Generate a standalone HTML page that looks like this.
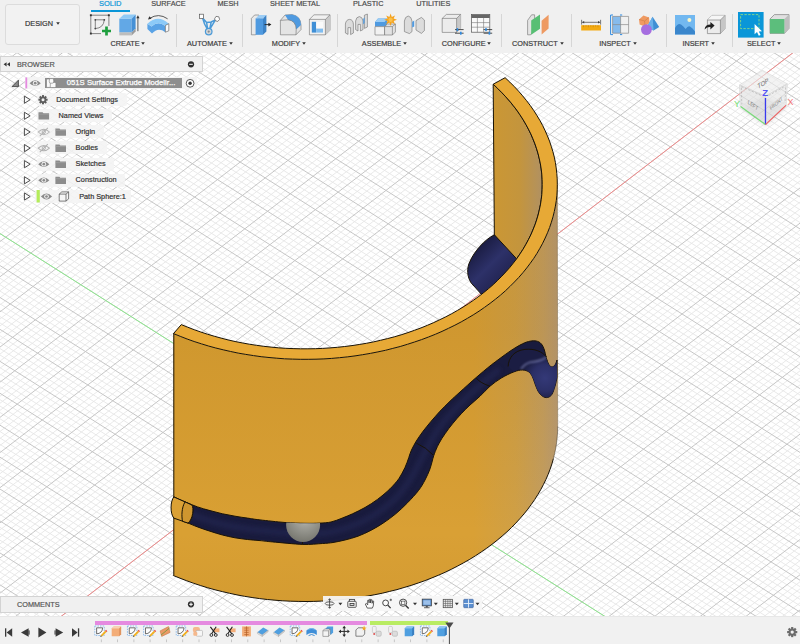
<!DOCTYPE html>
<html><head><meta charset="utf-8"><title>Fusion</title>
<style>
html,body{margin:0;padding:0;background:#fff;}
body{width:800px;height:644px;position:relative;overflow:hidden;font-family:"Liberation Sans",sans-serif;font-size:7.3px;color:#3c3c3c;}
.abs{position:absolute;}
.t{position:absolute;white-space:nowrap;line-height:10px;height:10px;-webkit-text-stroke:0.18px currentColor;}
.tab{color:#4a4a4a;}
.sep{position:absolute;width:1px;background:#d6d6d6;top:14px;height:33px;}
.pill{position:absolute;background:rgba(243,243,243,0.86);border-radius:2px;height:13px;}
.arr{position:absolute;width:0;height:0;border-left:1.8px solid transparent;border-right:1.8px solid transparent;border-top:2.4px solid #333;}
svg{position:absolute;left:0;top:0;overflow:visible;}
</style></head><body>
<svg width="800" height="644" viewBox="0 0 800 644">
<path d="M-2.0 4.0L5.8 -2.0M-2.0 11.0L14.9 -2.0M-2.0 18.1L24.0 -2.0M-2.0 25.1L33.2 -2.0M-2.0 39.2L51.4 -2.0M-2.0 46.2L60.6 -2.0M-2.0 53.2L69.7 -2.0M-2.0 60.3L78.8 -2.0M-2.0 74.3L97.1 -2.0M-2.0 81.4L106.2 -2.0M-2.0 88.4L115.4 -2.0M-2.0 95.4L124.5 -2.0M-2.0 109.5L142.7 -2.0M-2.0 116.5L151.9 -2.0M-2.0 123.5L161.0 -2.0M-2.0 130.6L170.1 -2.0M-2.0 144.6L188.4 -2.0M-2.0 151.7L197.5 -2.0M-2.0 158.7L206.7 -2.0M-2.0 165.7L215.8 -2.0M-2.0 179.8L234.0 -2.0M-2.0 186.8L243.2 -2.0M-2.0 193.9L252.3 -2.0M-2.0 200.9L261.4 -2.0M-2.0 641.1L5.8 646.0M-2.0 215.0L279.7 -2.0M-2.0 634.7L15.9 646.0M-2.0 222.0L288.8 -2.0M-2.0 628.3L26.0 646.0M-2.0 229.0L298.0 -2.0M-2.0 621.9L36.1 646.0M-2.0 236.1L307.1 -2.0M-2.0 609.1L56.2 646.0M-2.0 250.1L325.3 -2.0M-2.0 602.8L66.3 646.0M-2.0 257.2L334.5 -2.0M-2.0 596.4L76.4 646.0M-2.0 264.2L343.6 -2.0M-2.0 590.0L86.5 646.0M-2.0 271.2L352.7 -2.0M-2.0 577.2L106.7 646.0M-2.0 285.3L371.0 -2.0M-2.0 570.8L116.8 646.0M-2.0 292.3L380.1 -2.0M-2.0 564.4L126.9 646.0M-2.0 299.4L389.3 -2.0M-2.0 558.1L137.0 646.0M-2.0 306.4L398.4 -2.0M-2.0 545.3L157.2 646.0M-2.0 320.5L416.7 -2.0M-2.0 538.9L167.2 646.0M-2.0 327.5L425.8 -2.0M-2.0 532.5L177.3 646.0M-2.0 334.5L434.9 -2.0M-2.0 526.1L187.4 646.0M-2.0 341.5L444.0 -2.0M-2.0 513.3L207.6 646.0M-2.0 355.6L462.3 -2.0M-2.0 507.0L217.7 646.0M-2.0 362.6L471.4 -2.0M-2.0 500.6L227.8 646.0M-2.0 369.7L480.6 -2.0M-2.0 494.2L237.9 646.0M-2.0 376.7L489.7 -2.0M-2.0 481.4L258.1 646.0M-2.0 390.8L508.0 -2.0M-2.0 475.0L268.2 646.0M-2.0 397.8L517.1 -2.0M-2.0 468.6L278.3 646.0M-2.0 404.8L526.2 -2.0M-2.0 462.2L288.3 646.0M-2.0 411.9L535.3 -2.0M-2.0 449.5L308.5 646.0M-2.0 425.9L553.6 -2.0M-2.0 443.1L318.6 646.0M-2.0 433.0L562.7 -2.0M-2.0 436.7L328.7 646.0M-2.0 440.0L571.9 -2.0M-2.0 430.3L338.8 646.0M-2.0 447.0L581.0 -2.0M-2.0 417.5L359.0 646.0M-2.0 461.1L599.3 -2.0M-2.0 411.2L369.1 646.0M-2.0 468.1L608.4 -2.0M-2.0 404.8L379.2 646.0M-2.0 475.2L617.5 -2.0M-2.0 398.4L389.3 646.0M-2.0 482.2L626.7 -2.0M-2.0 385.6L409.4 646.0M-2.0 496.3L644.9 -2.0M-2.0 379.2L419.5 646.0M-2.0 503.3L654.0 -2.0M-2.0 372.8L429.6 646.0M-2.0 510.3L663.2 -2.0M-2.0 366.4L439.7 646.0M-2.0 517.4L672.3 -2.0M-2.0 353.7L459.9 646.0M-2.0 531.4L690.6 -2.0M-2.0 347.3L470.0 646.0M-2.0 538.5L699.7 -2.0M-2.0 340.9L480.1 646.0M-2.0 545.5L708.8 -2.0M-2.0 334.5L490.2 646.0M-2.0 552.5L718.0 -2.0M-2.0 321.7L510.4 646.0M-2.0 566.6L736.2 -2.0M-2.0 315.3L520.5 646.0M-2.0 573.6L745.3 -2.0M-2.0 309.0L530.5 646.0M-2.0 580.6L754.5 -2.0M-2.0 302.6L540.6 646.0M-2.0 587.7L763.6 -2.0M-2.0 289.8L560.8 646.0M-2.0 601.7L781.9 -2.0M-2.0 283.4L570.9 646.0M-2.0 608.8L791.0 -2.0M-2.0 277.0L581.0 646.0M-2.0 615.8L800.1 -2.0M-2.0 270.6L591.1 646.0M-2.0 622.8L802.0 3.6M-2.0 257.9L611.3 646.0M-2.0 636.9L802.0 17.7M-2.0 251.5L621.4 646.0M-2.0 643.9L802.0 24.7M-2.0 245.1L631.5 646.0M4.5 646.0L802.0 31.7M-2.0 238.7L641.6 646.0M13.6 646.0L802.0 38.8M-2.0 225.9L661.7 646.0M31.8 646.0L802.0 52.8M-2.0 219.5L671.8 646.0M41.0 646.0L802.0 59.8M-2.0 213.2L681.9 646.0M50.1 646.0L802.0 66.9M-2.0 206.8L692.0 646.0M59.2 646.0L802.0 73.9M-2.0 194.0L712.2 646.0M77.5 646.0L802.0 88.0M-2.0 187.6L722.3 646.0M86.6 646.0L802.0 95.0M-2.0 181.2L732.4 646.0M95.8 646.0L802.0 102.0M-2.0 174.8L742.5 646.0M104.9 646.0L802.0 109.1M-2.0 162.1L762.7 646.0M123.1 646.0L802.0 123.1M-2.0 155.7L772.7 646.0M132.3 646.0L802.0 130.2M-2.0 149.3L782.8 646.0M141.4 646.0L802.0 137.2M-2.0 142.9L792.9 646.0M150.5 646.0L802.0 144.2M-2.0 130.1L802.0 639.0M168.8 646.0L802.0 158.3M-2.0 123.7L802.0 632.6M177.9 646.0L802.0 165.3M-2.0 117.4L802.0 626.2M187.1 646.0L802.0 172.4M-2.0 111.0L802.0 619.8M196.2 646.0L802.0 179.4M-2.0 98.2L802.0 607.0M214.4 646.0L802.0 193.5M-2.0 91.8L802.0 600.6M223.6 646.0L802.0 200.5M-2.0 85.4L802.0 594.3M232.7 646.0L802.0 207.5M-2.0 79.0L802.0 587.9M241.8 646.0L802.0 214.6M-2.0 66.3L802.0 575.1M260.1 646.0L802.0 228.6M-2.0 59.9L802.0 568.7M269.2 646.0L802.0 235.7M-2.0 53.5L802.0 562.3M278.4 646.0L802.0 242.7M-2.0 47.1L802.0 555.9M287.5 646.0L802.0 249.7M-2.0 34.3L802.0 543.2M305.8 646.0L802.0 263.8M-2.0 27.9L802.0 536.8M314.9 646.0L802.0 270.8M-2.0 21.6L802.0 530.4M324.0 646.0L802.0 277.8M-2.0 15.2L802.0 524.0M333.1 646.0L802.0 284.9M-2.0 2.4L802.0 511.2M351.4 646.0L802.0 298.9M1.2 -2.0L802.0 504.8M360.5 646.0L802.0 306.0M11.2 -2.0L802.0 498.5M369.7 646.0L802.0 313.0M21.3 -2.0L802.0 492.1M378.8 646.0L802.0 320.0M41.5 -2.0L802.0 479.3M397.1 646.0L802.0 334.1M51.6 -2.0L802.0 472.9M406.2 646.0L802.0 341.1M61.7 -2.0L802.0 466.5M415.3 646.0L802.0 348.2M71.8 -2.0L802.0 460.1M424.4 646.0L802.0 355.2M92.0 -2.0L802.0 447.4M442.7 646.0L802.0 369.3M102.1 -2.0L802.0 441.0M451.8 646.0L802.0 376.3M112.2 -2.0L802.0 434.6M461.0 646.0L802.0 383.3M122.3 -2.0L802.0 428.2M470.1 646.0L802.0 390.4M142.4 -2.0L802.0 415.4M488.4 646.0L802.0 404.4M152.5 -2.0L802.0 409.0M497.5 646.0L802.0 411.5M162.6 -2.0L802.0 402.7M506.6 646.0L802.0 418.5M172.7 -2.0L802.0 396.3M515.8 646.0L802.0 425.5M192.9 -2.0L802.0 383.5M534.0 646.0L802.0 439.6M203.0 -2.0L802.0 377.1M543.1 646.0L802.0 446.6M213.1 -2.0L802.0 370.7M552.3 646.0L802.0 453.7M223.2 -2.0L802.0 364.3M561.4 646.0L802.0 460.7M243.4 -2.0L802.0 351.6M579.7 646.0L802.0 474.8M253.4 -2.0L802.0 345.2M588.8 646.0L802.0 481.8M263.5 -2.0L802.0 338.8M597.9 646.0L802.0 488.8M273.6 -2.0L802.0 332.4M607.1 646.0L802.0 495.9M293.8 -2.0L802.0 319.6M625.3 646.0L802.0 509.9M303.9 -2.0L802.0 313.2M634.4 646.0L802.0 516.9M314.0 -2.0L802.0 306.8M643.6 646.0L802.0 524.0M324.1 -2.0L802.0 300.5M652.7 646.0L802.0 531.0M344.3 -2.0L802.0 287.7M671.0 646.0L802.0 545.1M354.4 -2.0L802.0 281.3M680.1 646.0L802.0 552.1M364.5 -2.0L802.0 274.9M689.2 646.0L802.0 559.1M374.5 -2.0L802.0 268.5M698.4 646.0L802.0 566.2M394.7 -2.0L802.0 255.8M716.6 646.0L802.0 580.2M404.8 -2.0L802.0 249.4M725.7 646.0L802.0 587.3M414.9 -2.0L802.0 243.0M734.9 646.0L802.0 594.3M425.0 -2.0L802.0 236.6M744.0 646.0L802.0 601.3M445.2 -2.0L802.0 223.8M762.3 646.0L802.0 615.4M455.3 -2.0L802.0 217.4M771.4 646.0L802.0 622.4M465.4 -2.0L802.0 211.0M780.5 646.0L802.0 629.5M475.5 -2.0L802.0 204.7M789.7 646.0L802.0 636.5M495.6 -2.0L802.0 191.9M505.7 -2.0L802.0 185.5M515.8 -2.0L802.0 179.1M525.9 -2.0L802.0 172.7M546.1 -2.0L802.0 160.0M556.2 -2.0L802.0 153.6M566.3 -2.0L802.0 147.2M576.4 -2.0L802.0 140.8M596.6 -2.0L802.0 128.0M606.7 -2.0L802.0 121.6M616.7 -2.0L802.0 115.2M626.8 -2.0L802.0 108.9M647.0 -2.0L802.0 96.1M657.1 -2.0L802.0 89.7M667.2 -2.0L802.0 83.3M677.3 -2.0L802.0 76.9M697.5 -2.0L802.0 64.1M707.6 -2.0L802.0 57.8M717.7 -2.0L802.0 51.4M727.8 -2.0L802.0 45.0M747.9 -2.0L802.0 32.2M758.0 -2.0L802.0 25.8M768.1 -2.0L802.0 19.4M778.2 -2.0L802.0 13.1M798.4 -2.0L802.0 0.3" stroke="#e6e6e6" stroke-width="0.9" fill="none"/>
<path d="M-2.0 32.1L42.3 -2.0M-2.0 67.3L88.0 -2.0M-2.0 102.4L133.6 -2.0M-2.0 137.6L179.3 -2.0M-2.0 172.8L224.9 -2.0M-2.0 207.9L270.6 -2.0M-2.0 615.5L46.1 646.0M-2.0 243.1L316.2 -2.0M-2.0 583.6L96.6 646.0M-2.0 278.3L361.9 -2.0M-2.0 551.7L147.1 646.0M-2.0 313.4L407.5 -2.0M-2.0 519.7L197.5 646.0M-2.0 348.6L453.2 -2.0M-2.0 487.8L248.0 646.0M-2.0 383.7L498.8 -2.0M-2.0 455.9L298.4 646.0M-2.0 418.9L544.5 -2.0M-2.0 423.9L348.9 646.0M-2.0 454.1L590.1 -2.0M-2.0 392.0L399.4 646.0M-2.0 489.2L635.8 -2.0M-2.0 360.1L449.8 646.0M-2.0 524.4L681.4 -2.0M-2.0 328.1L500.3 646.0M-2.0 559.5L727.1 -2.0M-2.0 296.2L550.7 646.0M-2.0 594.7L772.7 -2.0M-2.0 264.3L601.2 646.0M-2.0 629.9L802.0 10.6M-2.0 232.3L651.6 646.0M22.7 646.0L802.0 45.8M-2.0 200.4L702.1 646.0M68.4 646.0L802.0 80.9M-2.0 168.5L752.6 646.0M114.0 646.0L802.0 116.1M-2.0 136.5L802.0 645.4M159.7 646.0L802.0 151.3M-2.0 104.6L802.0 613.4M205.3 646.0L802.0 186.4M-2.0 72.6L802.0 581.5M251.0 646.0L802.0 221.6M-2.0 40.7L802.0 549.5M296.6 646.0L802.0 256.8M-2.0 8.8L802.0 517.6M342.3 646.0L802.0 291.9M31.4 -2.0L802.0 485.7M387.9 646.0L802.0 327.1M81.9 -2.0L802.0 453.7M433.6 646.0L802.0 362.2M132.3 -2.0L802.0 421.8M479.2 646.0L802.0 397.4M182.8 -2.0L802.0 389.9M524.9 646.0L802.0 432.6M233.3 -2.0L802.0 357.9M570.5 646.0L802.0 467.7M283.7 -2.0L802.0 326.0M616.2 646.0L802.0 502.9M334.2 -2.0L802.0 294.1M661.8 646.0L802.0 538.0M384.6 -2.0L802.0 262.1M707.5 646.0L802.0 573.2M435.1 -2.0L802.0 230.2M753.1 646.0L802.0 608.4M485.6 -2.0L802.0 198.3M798.8 646.0L802.0 643.5M536.0 -2.0L802.0 166.3M586.5 -2.0L802.0 134.4M636.9 -2.0L802.0 102.5M687.4 -2.0L802.0 70.5M737.8 -2.0L802.0 38.6M788.3 -2.0L802.0 6.7" stroke="#c6c6c6" stroke-width="1" fill="none"/>
<path d="M-44.4 205.5L907.8 808.1" stroke="#8fe88f" stroke-width="1" fill="none"/>
<path d="M-57.8 708.0L852.6 6.8" stroke="#f08a8a" stroke-width="1" fill="none"/>
<defs>
<linearGradient id="gFront" gradientUnits="userSpaceOnUse" x1="174" y1="0" x2="558" y2="0">
<stop offset="0" stop-color="#d9a033"/><stop offset="0.78" stop-color="#d9a035"/><stop offset="0.89" stop-color="#d0a046"/><stop offset="0.96" stop-color="#c49e5e"/><stop offset="1" stop-color="#b89a72"/></linearGradient>
<linearGradient id="gInner" gradientUnits="userSpaceOnUse" x1="494" y1="0" x2="545" y2="0">
<stop offset="0" stop-color="#cb9734"/><stop offset="0.5" stop-color="#c4953d"/><stop offset="0.85" stop-color="#b5925a"/><stop offset="1" stop-color="#ab8f68"/></linearGradient>
<linearGradient id="gNavy" gradientUnits="userSpaceOnUse" x1="0" y1="-11" x2="0" y2="11">
<stop offset="0" stop-color="#1a1c3c"/><stop offset="0.5" stop-color="#23264f"/><stop offset="1" stop-color="#1b1d40"/></linearGradient>
<radialGradient id="gBall" cx="0.55" cy="0.3" r="0.7"><stop offset="0" stop-color="#cfcfca"/><stop offset="0.3" stop-color="#a3a39c"/><stop offset="1" stop-color="#77776f"/></radialGradient>
<radialGradient id="gPocket" gradientUnits="userSpaceOnUse" cx="538" cy="366" r="22"><stop offset="0" stop-color="#3c4180"/><stop offset="0.6" stop-color="#2a2d5e"/><stop offset="1" stop-color="#1d1f45"/></radialGradient>
</defs>
<path d="M493.2 84.2L496.9 87.7 500.6 91.3 504.1 94.9 507.4 98.6 510.6 102.4 513.7 106.2 516.6 110.0 519.4 113.9 522.0 117.9 524.4 121.9 526.8 126.0 528.9 130.1 530.9 134.2 532.7 138.4 534.4 142.6 535.9 146.8 537.3 151.1 538.5 155.3 539.5 159.6 540.4 164.0 541.1 168.3 541.6 172.6 542.0 177.0 542.2 181.3 542.2 185.7 542.1 190.1 541.8 194.4 541.3 198.8 540.7 203.1 539.9 207.4 538.9 211.7 537.8 216.0 536.5 220.3 535.1 224.5 533.4 228.7 531.7 232.9 529.7 237.1 527.6 241.2 525.4 245.3 523.0 249.3 520.4 253.3 517.7 257.2 514.9 261.1 511.9 264.9 508.7 268.7 505.4 272.4 502.0 276.1 498.4 279.6 494.7 283.2Z" fill="url(#gInner)" stroke="#191307" stroke-width="1" stroke-linejoin="round"/>
<linearGradient id="gTube" gradientUnits="userSpaceOnUse" x1="476" y1="250" x2="508" y2="282"><stop offset="0" stop-color="#1b1d44"/><stop offset="0.45" stop-color="#2d3169"/><stop offset="1" stop-color="#1f214c"/></linearGradient>
<path d="M494.4 234.8L517.5 259.8L510 269.4L497.5 282.5L481.9 294.8L471.3 283.1C467 277 466.5 268 470 261.3C474 252 484 240 494.4 234.8Z" fill="url(#gTube)" stroke="#191307" stroke-width="1" stroke-linejoin="round"/>
<path d="M557.4 184.4L557.2 189.8 556.9 195.1 556.3 200.5 555.4 205.9 554.4 211.2 553.1 216.5 551.5 221.7 549.8 227.0 547.8 232.2 545.5 237.3 543.1 242.4 540.4 247.5 537.5 252.4 534.4 257.4 531.0 262.2 527.5 267.0 523.7 271.7 519.7 276.3 515.6 280.8 511.2 285.3 506.6 289.6 501.9 293.9 496.9 298.0 491.8 302.0 486.5 306.0 481.1 309.8 475.4 313.5 469.6 317.0 463.7 320.5 457.6 323.8 451.3 327.0 444.9 330.0 438.4 332.9 431.8 335.7 425.0 338.3 418.1 340.8 411.2 343.1 404.1 345.3 396.9 347.4 389.7 349.2 382.3 351.0 374.9 352.5 367.4 353.9 359.9 355.2 352.3 356.3 344.7 357.2 337.0 357.9 329.3 358.5 321.6 359.0 313.8 359.2 306.1 359.3 298.3 359.3 290.6 359.0 282.9 358.7 275.2 358.1 267.5 357.4 259.8 356.5 252.2 355.4 244.7 354.2 237.2 352.9 229.8 351.3 222.4 349.6 215.1 347.8 207.9 345.8 200.8 343.7 193.8 341.4 186.9 338.9 180.1 336.3 173.5 333.6 173.8 575.0 173.3 575.5 180.0 578.2 186.8 580.8 193.7 583.3 200.7 585.6 207.8 587.8 215.0 589.8 222.3 591.6 229.6 593.3 237.0 594.9 244.5 596.3 252.1 597.5 259.7 598.6 267.4 599.5 275.0 600.2 282.8 600.8 290.5 601.2 298.2 601.4 306.0 601.5 313.8 601.4 321.5 601.1 329.2 600.7 336.9 600.1 344.6 599.4 352.3 598.4 359.9 597.4 367.4 596.1 374.9 594.7 382.3 593.2 389.7 591.4 397.0 589.6 404.1 587.5 411.2 585.4 418.2 583.0 425.1 580.6 431.9 577.9 438.5 575.2 445.1 572.3 451.5 569.2 457.7 566.0 463.8 562.7 469.8 559.3 475.6 555.7 481.2 552.0 486.7 548.2 492.0 544.3 497.2 540.2 502.1 536.1 506.9 531.9 511.5 527.5 515.8 523.1 520.0 518.5 524.0 513.9 527.8 509.2 531.3 504.4 534.7 499.6 537.8 494.6 540.7 489.7 543.4 484.6 545.9 479.5 548.1 474.4 550.1 469.2 551.9 463.9 553.4 458.6 554.7 453.3 555.8 448.0 556.6 442.7 557.2 437.3 557.6 431.9 557.7 426.5Z" fill="url(#gFront)" stroke="none"/>
<linearGradient id="gV" gradientUnits="userSpaceOnUse" x1="0" y1="330" x2="0" y2="600"><stop offset="0" stop-color="#7a4a00" stop-opacity="0.10"/><stop offset="0.55" stop-color="#7a4a00" stop-opacity="0.03"/><stop offset="0.75" stop-color="#7a4a00" stop-opacity="0"/><stop offset="1" stop-color="#7a4a00" stop-opacity="0.05"/></linearGradient>
<path d="M557.4 184.4L557.2 189.8 556.9 195.1 556.3 200.5 555.4 205.9 554.4 211.2 553.1 216.5 551.5 221.7 549.8 227.0 547.8 232.2 545.5 237.3 543.1 242.4 540.4 247.5 537.5 252.4 534.4 257.4 531.0 262.2 527.5 267.0 523.7 271.7 519.7 276.3 515.6 280.8 511.2 285.3 506.6 289.6 501.9 293.9 496.9 298.0 491.8 302.0 486.5 306.0 481.1 309.8 475.4 313.5 469.6 317.0 463.7 320.5 457.6 323.8 451.3 327.0 444.9 330.0 438.4 332.9 431.8 335.7 425.0 338.3 418.1 340.8 411.2 343.1 404.1 345.3 396.9 347.4 389.7 349.2 382.3 351.0 374.9 352.5 367.4 353.9 359.9 355.2 352.3 356.3 344.7 357.2 337.0 357.9 329.3 358.5 321.6 359.0 313.8 359.2 306.1 359.3 298.3 359.3 290.6 359.0 282.9 358.7 275.2 358.1 267.5 357.4 259.8 356.5 252.2 355.4 244.7 354.2 237.2 352.9 229.8 351.3 222.4 349.6 215.1 347.8 207.9 345.8 200.8 343.7 193.8 341.4 186.9 338.9 180.1 336.3 173.5 333.6 173.8 575.0 173.3 575.5 180.0 578.2 186.8 580.8 193.7 583.3 200.7 585.6 207.8 587.8 215.0 589.8 222.3 591.6 229.6 593.3 237.0 594.9 244.5 596.3 252.1 597.5 259.7 598.6 267.4 599.5 275.0 600.2 282.8 600.8 290.5 601.2 298.2 601.4 306.0 601.5 313.8 601.4 321.5 601.1 329.2 600.7 336.9 600.1 344.6 599.4 352.3 598.4 359.9 597.4 367.4 596.1 374.9 594.7 382.3 593.2 389.7 591.4 397.0 589.6 404.1 587.5 411.2 585.4 418.2 583.0 425.1 580.6 431.9 577.9 438.5 575.2 445.1 572.3 451.5 569.2 457.7 566.0 463.8 562.7 469.8 559.3 475.6 555.7 481.2 552.0 486.7 548.2 492.0 544.3 497.2 540.2 502.1 536.1 506.9 531.9 511.5 527.5 515.8 523.1 520.0 518.5 524.0 513.9 527.8 509.2 531.3 504.4 534.7 499.6 537.8 494.6 540.7 489.7 543.4 484.6 545.9 479.5 548.1 474.4 550.1 469.2 551.9 463.9 553.4 458.6 554.7 453.3 555.8 448.0 556.6 442.7 557.2 437.3 557.6 431.9 557.7 426.5Z" fill="url(#gV)" stroke="none"/>
<path d="M173.8 333.2L173.8 575.0 173.3 575.5 180.0 578.2 186.8 580.8 193.7 583.3 200.7 585.6 207.8 587.8 215.0 589.8 222.3 591.6 229.6 593.3 237.0 594.9 244.5 596.3 252.1 597.5 259.7 598.6 267.4 599.5 275.0 600.2 282.8 600.8 290.5 601.2 298.2 601.4 306.0 601.5 313.8 601.4 321.5 601.1 329.2 600.7 336.9 600.1 344.6 599.4 352.3 598.4 359.9 597.4 367.4 596.1 374.9 594.7 382.3 593.2 389.7 591.4 397.0 589.6 404.1 587.5 411.2 585.4 418.2 583.0 425.1 580.6 431.9 577.9 438.5 575.2 445.1 572.3 451.5 569.2 457.7 566.0 463.8 562.7 469.8 559.3 475.6 555.7 481.2 552.0 486.7 548.2 492.0 544.3 497.2 540.2 502.1 536.1 506.9 531.9 511.5 527.5 515.8 523.1 520.0 518.5 524.0 513.9 527.8 509.2 531.3 504.4 534.7 499.6 537.8 494.6 540.7 489.7 543.4 484.6 545.9 479.5 548.1 474.4 550.1 469.2 551.9 463.9 553.4 458.6" fill="none" stroke="#191307" stroke-width="1" stroke-linejoin="round"/>
<path d="M553.4 458.6L554.7 453.3 555.8 448.0 556.6 442.7 557.2 437.3 557.6 431.9 557.7 426.5" fill="none" stroke="#1a1408" stroke-width="0.9" opacity="0.45"/>
<path d="M557.3 184.4L557.7 426.5" fill="none" stroke="#6e5a36" stroke-width="0.8" opacity="0.5"/>
<path d="M505.1 77.7L509.8 82.1 514.3 86.6 518.6 91.2 522.6 95.8 526.5 100.6 530.2 105.4 533.6 110.3 536.8 115.3 539.8 120.3 542.6 125.4 545.1 130.6 547.4 135.8 549.5 141.1 551.3 146.4 552.9 151.7 554.3 157.1 555.4 162.5 556.2 167.9 556.8 173.4 557.2 178.8 557.3 184.3 557.2 189.7 556.9 195.2 556.3 200.6 555.4 206.1 554.3 211.5 553.0 216.8 551.4 222.2 549.6 227.5 547.5 232.8 545.2 238.0 542.7 243.2 539.9 248.3 537.0 253.3 533.8 258.3 530.3 263.2 526.7 268.0 522.8 272.8 518.7 277.5 514.4 282.0 509.9 286.5 505.3 290.9 500.4 295.2 495.3 299.3 490.0 303.4 484.6 307.3 479.0 311.2 473.2 314.9 467.3 318.4 461.2 321.9 454.9 325.2 448.5 328.3 442.0 331.4 435.3 334.3 428.5 337.0 421.6 339.6 414.5 342.0 407.4 344.3 400.2 346.5 392.8 348.4 385.4 350.3 377.9 351.9 370.3 353.4 362.7 354.7 355.0 355.9 347.3 356.9 339.5 357.7 331.7 358.4 323.9 358.9 316.0 359.2 308.2 359.3 300.3 359.3 292.4 359.1 284.6 358.8 276.8 358.2 269.0 357.5 261.2 356.7 253.5 355.6 245.8 354.4 238.2 353.1 230.7 351.5 223.2 349.8 215.8 348.0 208.5 346.0 201.3 343.8 194.1 341.5 187.1 339.0 180.2 336.3 173.5 333.6 181.3 324.6 187.7 327.2 194.2 329.7 200.8 332.0 207.4 334.2 214.2 336.2 221.1 338.1 228.0 339.9 235.1 341.5 242.2 342.9 249.3 344.2 256.5 345.3 263.8 346.3 271.1 347.1 278.4 347.8 285.8 348.3 293.1 348.6 300.5 348.8 307.9 348.8 315.3 348.7 322.7 348.4 330.0 347.9 337.4 347.3 344.7 346.5 352.0 345.6 359.2 344.5 366.3 343.3 373.5 341.9 380.5 340.3 387.5 338.6 394.4 336.8 401.2 334.8 407.9 332.6 414.5 330.3 421.0 327.9 427.4 325.3 433.7 322.6 439.8 319.7 445.8 316.8 451.7 313.7 457.5 310.4 463.0 307.1 468.5 303.6 473.8 300.0 478.9 296.3 483.8 292.5 488.6 288.6 493.2 284.6 497.6 280.4 501.8 276.2 505.8 271.9 509.7 267.6 513.3 263.1 516.8 258.6 520.0 253.9 523.0 249.3 525.8 244.5 528.4 239.7 530.8 234.9 532.9 230.0 534.9 225.0 536.6 220.0 538.1 215.0 539.3 209.9 540.4 204.9 541.2 199.8 541.8 194.7 542.1 189.5 542.2 184.4 542.1 179.3 541.8 174.2 541.2 169.0 540.4 163.9 539.3 158.9 538.1 153.8 536.6 148.8 534.9 143.8 532.9 138.8 530.8 133.9 528.4 129.1 525.8 124.3 523.0 119.5 520.0 114.9 516.8 110.2 513.3 105.7 509.7 101.2 505.8 96.9 501.8 92.6 497.6 88.4 493.2 84.2Z" fill="#e7a936" stroke="#191307" stroke-width="1" stroke-linejoin="round"/>
<path d="M173.8 496.9C175.6 497.7 181.0 500.2 185.0 501.9C189.0 503.6 193.3 505.4 197.5 506.9C201.7 508.3 205.8 509.5 210.0 510.6C214.2 511.7 218.3 512.8 222.5 513.8C226.7 514.7 230.8 515.5 235.0 516.2C239.2 517.0 243.3 517.5 247.5 518.1C251.7 518.7 253.8 519.2 260.0 519.9C266.2 520.6 277.5 521.9 285.0 522.5C292.5 523.1 299.2 523.2 305.0 523.3C310.8 523.4 315.7 523.3 320.0 523.1C324.3 522.9 327.3 522.8 331.0 522.0C334.7 521.2 338.4 519.6 342.0 518.2C345.6 516.8 348.7 515.5 352.5 513.8C356.3 512.0 360.8 509.9 365.0 507.5C369.2 505.1 373.3 502.5 377.5 499.4C381.7 496.3 386.5 492.2 390.0 488.8C393.5 485.3 396.2 482.3 398.8 478.8C401.2 475.2 403.3 471.0 405.0 467.5C406.7 464.0 407.7 460.4 408.8 457.5C409.8 454.6 410.2 452.7 411.5 450.0C412.8 447.3 414.3 444.4 416.2 441.2C418.2 438.1 420.6 434.6 423.1 431.2C425.6 427.9 428.4 424.6 431.2 421.2C434.1 417.9 436.9 414.6 440.0 411.2C443.1 407.9 446.7 404.5 450.0 401.2C453.3 398.0 455.6 396.0 460.0 392.0C464.4 388.0 471.0 382.0 476.2 377.5C481.5 373.0 485.6 369.4 491.2 365.0C496.9 360.6 504.8 354.8 510.0 351.2C515.2 347.7 519.2 345.4 522.5 343.8C525.8 342.1 527.7 341.7 530.0 341.2C532.3 340.8 534.4 340.6 536.2 341.0C538.1 341.4 539.9 342.2 541.2 343.8C542.6 345.2 543.6 347.7 544.4 350.0C545.2 352.3 545.5 355.1 546.2 357.5C547.0 359.9 547.8 362.8 548.8 364.4C549.7 366.0 550.9 366.8 551.9 366.9C552.9 367.0 554.1 366.1 555.0 365.0C555.9 363.9 556.7 360.8 557.0 360.0L557.0 377.5C556.7 379.0 555.9 383.4 555.0 386.2C554.1 389.1 553.1 392.5 551.9 394.4C550.6 396.3 549.1 397.2 547.5 397.5C545.9 397.8 544.1 397.3 542.5 396.2C540.9 395.2 539.4 393.3 538.1 391.2C536.9 389.2 535.9 386.1 535.0 383.8C534.1 381.4 533.5 378.9 532.5 376.9C531.5 374.9 530.4 373.0 528.8 371.9C527.1 370.8 525.0 370.0 522.5 370.0C520.0 370.0 517.3 370.5 513.8 371.9C510.2 373.2 505.2 375.7 501.2 378.1C497.3 380.5 493.5 383.2 490.0 386.2C486.5 389.3 483.3 393.1 480.0 396.2C476.7 399.4 473.1 402.1 470.0 405.0C466.9 407.9 464.2 410.6 461.2 413.8C458.3 416.9 455.2 420.4 452.5 423.8C449.8 427.1 447.3 430.4 445.0 433.8C442.7 437.1 440.5 440.4 438.8 443.8C437.0 447.1 435.4 451.0 434.4 453.8C433.4 456.5 433.2 457.5 432.5 460.0C431.8 462.5 431.2 465.4 430.0 468.8C428.8 472.1 426.9 476.4 425.0 480.0C423.1 483.6 421.4 486.7 418.5 490.5C415.6 494.3 411.3 498.9 407.5 502.8C403.7 506.7 399.6 510.6 395.5 514.0C391.4 517.4 387.1 520.5 383.0 523.2C378.9 525.9 375.2 528.1 371.0 530.3C366.8 532.5 362.3 534.6 358.0 536.2C353.7 537.8 349.2 539.0 345.0 540.0C340.8 541.0 336.8 541.9 333.0 542.5C329.2 543.1 327.6 543.2 322.5 543.5C317.4 543.8 310.8 544.7 302.5 544.4C294.2 544.1 279.6 542.5 272.5 541.9C265.4 541.3 264.2 541.0 260.0 540.6C255.8 540.2 251.7 540.0 247.5 539.5C243.3 539.0 239.2 538.5 235.0 537.8C230.8 537.0 226.7 536.1 222.5 535.0C218.3 533.9 214.2 532.6 210.0 531.2C205.8 529.9 201.2 528.3 197.5 526.9C193.8 525.5 189.7 523.7 188.1 523.1Z" fill="#191b3d" stroke="#191307" stroke-width="1" stroke-linejoin="round"/>
<clipPath id="cBall"><path d="M173.8 496.9C175.6 497.7 181.0 500.2 185.0 501.9C189.0 503.6 193.3 505.4 197.5 506.9C201.7 508.3 205.8 509.5 210.0 510.6C214.2 511.7 218.3 512.8 222.5 513.8C226.7 514.7 230.8 515.5 235.0 516.2C239.2 517.0 243.3 517.5 247.5 518.1C251.7 518.7 253.8 519.2 260.0 519.9C266.2 520.6 277.5 521.9 285.0 522.5C292.5 523.1 299.2 523.2 305.0 523.3C310.8 523.4 315.7 523.3 320.0 523.1C324.3 522.9 327.3 522.8 331.0 522.0C334.7 521.2 338.4 519.6 342.0 518.2C345.6 516.8 348.7 515.5 352.5 513.8C356.3 512.0 360.8 509.9 365.0 507.5C369.2 505.1 373.3 502.5 377.5 499.4C381.7 496.3 386.5 492.2 390.0 488.8C393.5 485.3 396.2 482.3 398.8 478.8C401.2 475.2 403.3 471.0 405.0 467.5C406.7 464.0 407.7 460.4 408.8 457.5C409.8 454.6 410.2 452.7 411.5 450.0C412.8 447.3 414.3 444.4 416.2 441.2C418.2 438.1 420.6 434.6 423.1 431.2C425.6 427.9 428.4 424.6 431.2 421.2C434.1 417.9 436.9 414.6 440.0 411.2C443.1 407.9 446.7 404.5 450.0 401.2C453.3 398.0 455.6 396.0 460.0 392.0C464.4 388.0 471.0 382.0 476.2 377.5C481.5 373.0 485.6 369.4 491.2 365.0C496.9 360.6 504.8 354.8 510.0 351.2C515.2 347.7 519.2 345.4 522.5 343.8C525.8 342.1 527.7 341.7 530.0 341.2C532.3 340.8 534.4 340.6 536.2 341.0C538.1 341.4 539.9 342.2 541.2 343.8C542.6 345.2 543.6 347.7 544.4 350.0C545.2 352.3 545.5 355.1 546.2 357.5C547.0 359.9 547.8 362.8 548.8 364.4C549.7 366.0 550.9 366.8 551.9 366.9C552.9 367.0 554.1 366.1 555.0 365.0C555.9 363.9 556.7 360.8 557.0 360.0L557.0 377.5C556.7 379.0 555.9 383.4 555.0 386.2C554.1 389.1 553.1 392.5 551.9 394.4C550.6 396.3 549.1 397.2 547.5 397.5C545.9 397.8 544.1 397.3 542.5 396.2C540.9 395.2 539.4 393.3 538.1 391.2C536.9 389.2 535.9 386.1 535.0 383.8C534.1 381.4 533.5 378.9 532.5 376.9C531.5 374.9 530.4 373.0 528.8 371.9C527.1 370.8 525.0 370.0 522.5 370.0C520.0 370.0 517.3 370.5 513.8 371.9C510.2 373.2 505.2 375.7 501.2 378.1C497.3 380.5 493.5 383.2 490.0 386.2C486.5 389.3 483.3 393.1 480.0 396.2C476.7 399.4 473.1 402.1 470.0 405.0C466.9 407.9 464.2 410.6 461.2 413.8C458.3 416.9 455.2 420.4 452.5 423.8C449.8 427.1 447.3 430.4 445.0 433.8C442.7 437.1 440.5 440.4 438.8 443.8C437.0 447.1 435.4 451.0 434.4 453.8C433.4 456.5 433.2 457.5 432.5 460.0C431.8 462.5 431.2 465.4 430.0 468.8C428.8 472.1 426.9 476.4 425.0 480.0C423.1 483.6 421.4 486.7 418.5 490.5C415.6 494.3 411.3 498.9 407.5 502.8C403.7 506.7 399.6 510.6 395.5 514.0C391.4 517.4 387.1 520.5 383.0 523.2C378.9 525.9 375.2 528.1 371.0 530.3C366.8 532.5 362.3 534.6 358.0 536.2C353.7 537.8 349.2 539.0 345.0 540.0C340.8 541.0 336.8 541.9 333.0 542.5C329.2 543.1 327.6 543.2 322.5 543.5C317.4 543.8 310.8 544.7 302.5 544.4C294.2 544.1 279.6 542.5 272.5 541.9C265.4 541.3 264.2 541.0 260.0 540.6C255.8 540.2 251.7 540.0 247.5 539.5C243.3 539.0 239.2 538.5 235.0 537.8C230.8 537.0 226.7 536.1 222.5 535.0C218.3 533.9 214.2 532.6 210.0 531.2C205.8 529.9 201.2 528.3 197.5 526.9C193.8 525.5 189.7 523.7 188.1 523.1Z"/></clipPath>
<filter id="fb" x="-10%" y="-10%" width="120%" height="120%"><feGaussianBlur stdDeviation="2.2"/></filter>
<g clip-path="url(#cBall)"><path d="M186.6 512.5C189.7 513.7 199.2 517.5 205.7 519.6C212.1 521.6 218.7 523.5 225.3 525.0C231.9 526.5 238.6 527.5 245.4 528.5C252.1 529.5 258.8 530.1 265.6 530.8C272.4 531.5 279.1 532.3 285.9 532.8C292.7 533.3 299.5 533.8 306.2 533.8C313.0 533.8 319.9 533.7 326.6 532.8C333.3 531.8 339.9 530.1 346.3 528.0C352.7 525.9 359.1 523.3 365.1 520.2C371.1 517.1 376.9 513.5 382.3 509.5C387.7 505.5 393.0 501.1 397.6 496.1C402.2 491.2 406.0 485.7 409.7 480.1C413.4 474.5 416.4 468.4 419.6 462.5C422.8 456.6 425.8 450.5 429.1 444.6C432.4 438.8 435.5 432.9 439.4 427.4C443.3 421.9 447.8 416.9 452.4 411.9C456.9 406.9 461.7 402.0 466.7 397.4C471.6 392.7 476.7 388.2 481.9 383.8C487.0 379.4 494.8 372.9 497.4 370.7" fill="none" stroke="#262a58" stroke-width="6.5" opacity="0.5" filter="url(#fb)" stroke-linecap="round"/></g>
<radialGradient id="gTongue" gradientUnits="userSpaceOnUse" cx="545" cy="378" r="24"><stop offset="0" stop-color="#343978"/><stop offset="0.55" stop-color="#2b2f66"/><stop offset="1" stop-color="#2b2f66" stop-opacity="0"/></radialGradient>
<g clip-path="url(#cBall)"><circle cx="545" cy="378" r="24" fill="url(#gTongue)"/>
<path d="M508.1 366.3C508.5 358 514 350.5 525 349.4C535 348.6 542 351.5 546.3 356.9C544 359.5 538 361.5 530 362.3C525 363.5 523 368 513.8 371.9Z" fill="#1b1d43"/>
<path d="M546.3 356.9C544 359.5 538 361.3 530 362.3C525.5 363.5 523.5 366 521 369" fill="none" stroke="#8388bd" stroke-width="1.6" opacity="0.75" filter="url(#fb1)"/></g>
<filter id="fb1" x="-20%" y="-50%" width="140%" height="200%"><feGaussianBlur stdDeviation="0.8"/></filter>
<path d="M508.1 366.5C508.5 358 514 350.5 525 349.4C535 348.5 542 351.5 546.5 357" fill="none" stroke="#191307" stroke-width="1" stroke-linejoin="round"/>
<path d="M476.3 378.1Q479.4 382.5 490 386.3M416.3 443.1Q426.3 447.5 433.1 455M302.5 541.5L302.5 544.4" fill="none" stroke="#191307" stroke-width="1" stroke-linejoin="round"/>
<g clip-path="url(#cBall)"><circle cx="303.1" cy="525" r="17" fill="url(#gBall)"/></g>
<path d="M173.8 496.9C170.5 501 169.8 513 173.8 518.1L188.1 523.1C193 520 194 508 191.9 505L185 501.9Z" fill="#dba135" stroke="#191307" stroke-width="1" stroke-linejoin="round"/>
<path d="M185 501.9C181.5 508 181.5 516 182.5 521.3L188.1 523.1C193 519 194 508 191.9 505Z" fill="#cf962f" stroke="#191307" stroke-width="1" stroke-linejoin="round"/>
</svg>
<svg width="800" height="644" viewBox="0 0 800 644"><defs><filter id="vcb" x="-30%" y="-30%" width="160%" height="160%"><feGaussianBlur stdDeviation="2.2"/></filter></defs><path d="M741 108L765.5 126.5L787 106.5L765 97Z" fill="#9a9a9a" opacity="0.28" filter="url(#vcb)"/><g stroke="#cfcfcf" stroke-width="0.5" stroke-linejoin="round"><path d="M739.5 84.9L762.7 70.4L787.3 83.8L765.4 96.2Z" fill="rgba(236,236,236,0.62)"/><path d="M739.5 84.9L765.4 96.2L765.5 124.6L740.1 106.2Z" fill="rgba(222,222,222,0.62)"/><path d="M765.4 96.2L787.3 83.8L786.2 105.1L765.5 124.6Z" fill="rgba(229,229,229,0.62)"/></g><g stroke="#8c8c8c" stroke-width="0.55" stroke-dasharray="2.2 1.6" fill="none" opacity="0.75"><path d="M741.4 86.6L762 95.8M768.6 95.6L785.4 86M741.4 87.6L741.8 104.6M785.6 87.4L785 103"/></g><path d="M765.5 124.6L765.45 98" stroke="#3a3aee" stroke-width="1.3"/><path d="M765.5 124.6L740.6 106.6" stroke="#78dc78" stroke-width="1.2"/><path d="M765.5 124.6L786 105.4" stroke="#ee6262" stroke-width="1.2"/><text x="765.2" y="96.4" font-size="9.6" fill="#5555f2" text-anchor="middle" font-family="Liberation Sans" font-weight="bold">Z</text><text x="737" y="106.8" font-size="9" fill="#74e074" text-anchor="middle" font-family="Liberation Sans">Y</text><text x="790.6" y="105" font-size="9" fill="#f27474" text-anchor="middle" font-family="Liberation Sans">X</text><text transform="translate(763.4 85.6) rotate(-31) skewX(-22)" font-size="6.2" fill="#6e6e6e" text-anchor="middle" font-family="Liberation Sans">TOP</text><text transform="translate(752.6 107) rotate(35) skewX(22)" font-size="5" fill="#7e7e7e" text-anchor="middle" font-family="Liberation Sans">LEFT</text><text transform="translate(776.8 105.2) rotate(-41) skewX(-22)" font-size="4.7" fill="#7e7e7e" text-anchor="middle" font-family="Liberation Sans">FRONT</text></svg>
<div class="abs" style="left:0;top:0;width:800px;height:52.5px;background:#f0f0f0;"></div>
<div class="abs" style="left:5px;top:3.5px;width:72.5px;height:39px;border:1px solid #dcdcdc;border-radius:3px;background:#f2f2f2;"></div>
<div class="t" style="left:25.0px;top:18.5px;color:#333">DESIGN</div>
<svg style="left:56.4px;top:22.0px" width="5" height="4" viewBox="0 0 5 4"><path d="M0.2 0.3L3.8 0.3L2 2.8Z" fill="#333"/></svg>
<div class="t tab" style="left:99.0px;top:-1.4px;color:#0a96d8;font-size:7.5px">SOLID</div>
<div class="t tab" style="left:151.2px;top:-1.4px;">SURFACE</div>
<div class="t tab" style="left:217.5px;top:-1.4px;">MESH</div>
<div class="t tab" style="left:270.0px;top:-1.4px;">SHEET METAL</div>
<div class="t tab" style="left:353.0px;top:-1.4px;">PLASTIC</div>
<div class="t tab" style="left:416.2px;top:-1.4px;">UTILITIES</div>
<div class="abs" style="left:91px;top:10px;width:38.5px;height:1.6px;background:#0a96d8;"></div>
<div class="t" style="left:110.5px;top:39.0px;">CREATE</div>
<svg style="left:141.3px;top:42.1px" width="5" height="4" viewBox="0 0 5 4"><path d="M0.2 0.3L3.8 0.3L2 2.8Z" fill="#333"/></svg>
<div class="t" style="left:187.0px;top:39.0px;">AUTOMATE</div>
<svg style="left:228.8px;top:42.1px" width="5" height="4" viewBox="0 0 5 4"><path d="M0.2 0.3L3.8 0.3L2 2.8Z" fill="#333"/></svg>
<div class="t" style="left:271.8px;top:39.0px;">MODIFY</div>
<svg style="left:301.8px;top:42.1px" width="5" height="4" viewBox="0 0 5 4"><path d="M0.2 0.3L3.8 0.3L2 2.8Z" fill="#333"/></svg>
<div class="t" style="left:361.8px;top:39.0px;">ASSEMBLE</div>
<svg style="left:403.3px;top:42.1px" width="5" height="4" viewBox="0 0 5 4"><path d="M0.2 0.3L3.8 0.3L2 2.8Z" fill="#333"/></svg>
<div class="t" style="left:441.8px;top:39.0px;">CONFIGURE</div>
<svg style="left:487.3px;top:42.1px" width="5" height="4" viewBox="0 0 5 4"><path d="M0.2 0.3L3.8 0.3L2 2.8Z" fill="#333"/></svg>
<div class="t" style="left:512.0px;top:39.0px;">CONSTRUCT</div>
<svg style="left:559.8px;top:42.1px" width="5" height="4" viewBox="0 0 5 4"><path d="M0.2 0.3L3.8 0.3L2 2.8Z" fill="#333"/></svg>
<div class="t" style="left:599.2px;top:39.0px;">INSPECT</div>
<svg style="left:633.3px;top:42.1px" width="5" height="4" viewBox="0 0 5 4"><path d="M0.2 0.3L3.8 0.3L2 2.8Z" fill="#333"/></svg>
<div class="t" style="left:682.4px;top:39.0px;">INSERT</div>
<svg style="left:710.8px;top:42.1px" width="5" height="4" viewBox="0 0 5 4"><path d="M0.2 0.3L3.8 0.3L2 2.8Z" fill="#333"/></svg>
<div class="t" style="left:747.0px;top:39.0px;">SELECT</div>
<svg style="left:776.8px;top:42.1px" width="5" height="4" viewBox="0 0 5 4"><path d="M0.2 0.3L3.8 0.3L2 2.8Z" fill="#333"/></svg>
<div class="sep" style="left:175.6px"></div>
<div class="sep" style="left:242.1px"></div>
<div class="sep" style="left:336.6px"></div>
<div class="sep" style="left:430.8px"></div>
<div class="sep" style="left:501.4px"></div>
<div class="sep" style="left:571.4px"></div>
<div class="sep" style="left:665.9px"></div>
<div class="sep" style="left:731.6px"></div>
<svg width="800" height="53" viewBox="0 0 800 53"><g><path d="M101 33.6L90.8 33.6L90.8 15.2L108.9 15.2L108.9 26" fill="none" stroke="#555" stroke-width="0.7"/><g fill="#333"><rect x="89.9" y="14.3" width="1.9" height="1.9"/><rect x="107.9" y="14.3" width="1.9" height="1.9"/><rect x="89.9" y="32.6" width="1.9" height="1.9"/></g><path d="M95.3 28.6L95.3 19.8L104.3 19.8Q103.6 28 95.3 28.6Z" fill="none" stroke="#555" stroke-width="0.7"/><g fill="#444"><circle cx="95.3" cy="19.8" r="0.9"/><circle cx="104.3" cy="19.8" r="0.9"/><circle cx="95.3" cy="28.6" r="0.9"/></g><path d="M102 31L111 31M106.5 26.5L106.5 35.5" stroke="#1f9f3f" stroke-width="2.7"/></g><g><rect x="119.3" y="32.2" width="12.4" height="3.2" fill="#bdbdbd"/><path d="M131.7 32.2L135.6 28.2L135.6 31.4L131.7 35.4Z" fill="#9d9d9d"/><rect x="119.3" y="18.7" width="12.4" height="13.5" fill="#62a8e6"/><path d="M119.3 18.7L123.8 14.5L135.6 14.5L131.7 18.7Z" fill="#8fcaf6"/><path d="M131.7 18.7L135.6 14.5L135.6 28.2L131.7 32.2Z" fill="#4590d6"/><path d="M137.9 31.2L137.9 17.4" stroke="#333" stroke-width="0.8"/><path d="M137.9 15.2L136.3 18.2L139.5 18.2Z" fill="#333"/></g><g><path d="M147.4 23.7L151.6 26.6Q158 20 165.4 26L165.4 32.2Q158 26.8 152 33.6L147.4 29Z" fill="#5aa3e6"/><path d="M147.4 23.7Q158 13.6 168.8 23.7L165.4 26Q158 20 151.6 26.6Z" fill="#8ccaf8"/><path d="M165.4 25.4L168.8 23.7L168.8 30.8L165.4 32.2Z" fill="#fbfbfb" stroke="#555" stroke-width="0.6"/><path d="M149.6 18.4Q158.5 12.6 167.6 18.8" fill="none" stroke="#333" stroke-width="0.8"/><path d="M148 19.6L149.4 16.2L151.6 18.8Z" fill="#333"/></g><g><path d="M202.6 18L206.6 22.6L211.2 22L215.4 19.8M206.6 22.6L207.6 28.6M211.2 22L209.8 28.6M202.6 18Q204.2 24.4 207.2 28.8M215.4 19.8Q212.6 24.6 210 28.8" fill="none" stroke="#4a9ad8" stroke-width="1.5" stroke-linejoin="round"/><rect x="199.4" y="14.2" width="4.2" height="4.2" fill="#fff" stroke="#555" stroke-width="0.7"/><path d="M214.6 18.8L216 16.4L218.8 16.8L219.6 19.4L217.8 21.4L215.4 20.8Z" fill="#fff" stroke="#555" stroke-width="0.7"/><circle cx="208.7" cy="31.6" r="3.3" fill="#cfd4d8" stroke="#4a9ad8" stroke-width="1.2"/><circle cx="208.7" cy="31.6" r="1.1" fill="#8a8a8a"/></g><g><path d="M251.4 18.4L254.6 15L259 15L259 31.4L255.6 34.8L251.4 34.8Z" fill="#e9e9e9" stroke="#6f6f6f" stroke-width="0.6" stroke-linejoin="round"/><path d="M255.6 18.4L259 15L266.4 15L263 18.4Z" fill="#9ccdf5"/><rect x="255.6" y="18.4" width="7.4" height="16.4" fill="#4f9ae0"/><path d="M263 18.4L266.4 15L266.4 31.4L263 34.8Z" fill="#3b82c6"/><path d="M264.5 24.6L269 24.6" stroke="#222" stroke-width="0.9"/><path d="M271.4 24.6L268.4 22.8L268.4 26.4Z" fill="#222"/></g><g><path d="M280.4 20.4L285 15L292 14.6Q300.6 16 301 25L301 29.6L296 34.8L280.4 34.8Z" fill="#e4e4e4" stroke="#6f6f6f" stroke-width="0.6" stroke-linejoin="round"/><path d="M285 15L292 14.6Q300.6 16 301 25L296.2 29.6Q296 20.6 288 19.8Z" fill="#4f9ae0"/><path d="M280.4 20.4L288 19.8Q296 20.6 296.2 29.6L296 34.8" fill="none" stroke="#6f6f6f" stroke-width="0.6" stroke-linejoin="round"/></g><g><path d="M309.4 19.4L314 14.8L330 14.8L330 30.2L325.4 34.8L309.4 34.8Z" fill="#f1f1f1" stroke="#6f6f6f" stroke-width="0.6" stroke-linejoin="round"/><path d="M325.4 19.4L330 14.8L330 30.2L325.4 34.8Z" fill="#c9c9c9"/><path d="M309.4 19.4L325.4 19.4L325.4 34.8M325.4 19.4L330 14.8" fill="none" stroke="#6f6f6f" stroke-width="0.6" stroke-linejoin="round"/><path d="M311.8 21.8L316.2 21.8L316.2 32.6L311.8 32.6Z" fill="#3f8fd6"/><path d="M316.2 28.4L323 28.4L323 32.6L316.2 32.6Z" fill="#80bdf0"/><path d="M316.2 21.8L323 21.8L323 28.4L316.2 28.4Z" fill="#fafafa"/></g><g fill="#dcdcdc" stroke="#6f6f6f" stroke-width="0.6" stroke-linejoin="round"><path d="M345.4 24Q346 19.6 349.6 19.4Q353 19.6 353.4 24L353.4 33L350.6 34.6L350.6 27.6L348 27.6L348 34.4L345.4 33Z"/><path d="M355.6 21Q356.2 16.8 359.4 16.6Q362.4 16.8 363 21L363 29.6L360.4 31L360.4 24.4L358 24.4L358 31L355.6 29.6Z"/><path d="M364.4 15.2L367.4 14L367.4 27L364.4 28.4Z"/></g><path d="M363.2 19L364.6 17.2L364.6 23L363.2 24.2Z" fill="#4f9ae0"/><g><path d="M375 22L378 18.6L387.4 18.6L387.4 26.6L375 26.6Z" fill="#4f9ae0"/><path d="M375 22L378 18.6L387.4 18.6L384.6 22Z" fill="#9ccdf5"/><path d="M375 26.6L384.6 26.6L384.6 35L375 35Z" fill="#f2f2f2" stroke="#6f6f6f" stroke-width="0.6" stroke-linejoin="round"/><path d="M384.6 26.6L387.4 24L395.4 24L395.4 32L392.4 35L384.6 35Z" fill="#e2e2e2" stroke="#6f6f6f" stroke-width="0.6" stroke-linejoin="round"/><path d="M384.6 26.6L392.4 26.6L392.4 35M392.4 26.6L395.4 24" fill="none" stroke="#6f6f6f" stroke-width="0.6" stroke-linejoin="round"/><path d="M390.6 13.6L391.8 17L395 15.4L393.6 18.6L397 19.8L393.6 21L395 24.2L391.8 22.6L390.6 26L389.4 22.6L386.2 24.2L387.6 21L384.2 19.8L387.6 18.6L386.2 15.4L389.4 17Z" fill="#f5a21c"/><circle cx="390.6" cy="19.8" r="2.2" fill="#fbc04a"/></g><g fill="#dcdcdc" stroke="#6f6f6f" stroke-width="0.6" stroke-linejoin="round"><path d="M404.4 21Q405 16.6 408.2 16Q411.4 16.6 412 21L412 31.6L409.4 33.6L404.4 31.6Z"/><path d="M416 20.6L421.4 17.4L424.4 20L424.4 30.6L421.4 33.4L416 30Z"/></g><path d="M412.2 22L414.2 20.6L414.2 26.6L412.2 27.6Z" fill="#4f9ae0"/><g><path d="M442.2 18.4L446.4 14.4L460.6 14.4L460.6 28.4L456.6 32.4L442.2 32.4Z" fill="#ececec" stroke="#6f6f6f" stroke-width="0.6" stroke-linejoin="round"/><path d="M456.6 18.4L460.6 14.4L460.6 28.4L456.6 32.4Z" fill="#c8c8c8"/><path d="M442.2 18.4L456.6 18.4L456.6 32.4M456.6 18.4L460.6 14.4" fill="none" stroke="#6f6f6f" stroke-width="0.6" stroke-linejoin="round"/><path d="M455.0 29.6l8.6 0M455.0 33.2l8.6 0" stroke="#222" stroke-width="0.8"/><rect x="456.6" y="28.1" width="1.6" height="3" fill="#2f8ae0"/><rect x="460.0" y="31.7" width="1.6" height="3" fill="#2f8ae0"/></g><g><rect x="471.4" y="14.6" width="18.4" height="17.6" fill="#fafafa" stroke="#555" stroke-width="0.7"/><rect x="471.4" y="14.6" width="18.4" height="3.4" fill="#666"/><path d="M471.4 22.6L489.8 22.6M471.4 27.2L489.8 27.2M477.4 18L477.4 32.2M483.6 18L483.6 32.2" stroke="#777" stroke-width="0.6"/><path d="M483.6 29.6l8.6 0M483.6 33.2l8.6 0" stroke="#222" stroke-width="0.8"/><rect x="485.2" y="28.1" width="1.6" height="3" fill="#2f8ae0"/><rect x="488.6" y="31.7" width="1.6" height="3" fill="#2f8ae0"/></g><g><path d="M527.6 20.4L531.6 14.8L534.6 14.8L534.6 29L530.6 34.8L527.6 34.8Z" fill="#e4e4e4" stroke="#6f6f6f" stroke-width="0.6" stroke-linejoin="round"/><path d="M531.2 20.4L540 14.6L540 28.8L531.2 34.8Z" fill="#58bf74"/><path d="M541.6 20.8L548.6 14.8L548.6 28.6L541.6 34.6Z" fill="#ee9a62"/></g><g><rect x="581.2" y="25.2" width="19.8" height="5.3" fill="#f3aa12"/><path d="M583.6 25.2l0 2M586 25.2l0 1.4M588.4 25.2l0 2M590.8 25.2l0 1.4M593.2 25.2l0 2M595.6 25.2l0 1.4M598 25.2l0 2" stroke="#b87400" stroke-width="0.5"/><path d="M581.6 19.8L581.6 24.6M600.6 19.8L600.6 24.6M582.6 22.3L599.6 22.3" stroke="#444" stroke-width="0.7"/><path d="M581.8 22.3L584.2 21.1L584.2 23.5ZM600.4 22.3L598 21.1L598 23.5Z" fill="#444"/></g><g><rect x="612.6" y="16.4" width="8" height="16.8" fill="#86bbec"/><path d="M612.6 16.4L628.6 16.4L628.6 33.2L612.6 33.2ZM620.6 16.4L620.6 33.2M612.6 24.6L628.6 24.6" fill="none" stroke="#8a8a8a" stroke-width="0.7"/><path d="M613 15L610.6 15L610.6 34.6L613 34.6M620 15L622.2 15M620 34.6L622.2 34.6" fill="none" stroke="#2f8ae0" stroke-width="1"/></g><g><path d="M639 19.4L643.4 15.4L649 17.4L649.6 23L645 26.6L639.6 24.6Z" fill="#ef9a62"/><path d="M639 19.4L644.6 21L649 17.4M644.6 21L645 26.6" fill="none" stroke="#c9743c" stroke-width="0.5"/><path d="M652.6 16.8L659.2 27L653.6 30.6L646.6 27.6Z" fill="#3f8fd4"/><path d="M652.6 16.8L653.6 30.6L646.6 27.6Z" fill="#6ab0ea"/><circle cx="646.4" cy="29.6" r="5.4" fill="#a66ee0"/></g><g><rect x="675" y="15" width="20" height="19.4" fill="#72b8f0"/><path d="M675 28Q678 22.6 681 24.6Q683 26 685.6 29Q688 25.6 690 26.6Q692.6 28 695 31.6L695 34.4L675 34.4Z" fill="#3a86cc"/><circle cx="689.4" cy="20" r="2" fill="#faf6c8"/></g><g><path d="M707.4 20L712 15.4L725 15.4L725 28.6L720.4 33.6L707.4 33.6Z" fill="#ebebeb" stroke="#6f6f6f" stroke-width="0.6" stroke-linejoin="round"/><path d="M720.4 20L725 15.4L725 28.6L720.4 33.6Z" fill="#c6c6c6"/><path d="M707.4 20L712 15.4L725 15.4L720.4 20Z" fill="#f6f6f6"/><path d="M707.4 20L720.4 20L720.4 33.6M720.4 20L725 15.4" fill="none" stroke="#6f6f6f" stroke-width="0.6" stroke-linejoin="round"/><path d="M704.6 29.4Q705 24.4 710.4 24.4L710.4 22L714.6 25.6L710.4 29.4L710.4 27Q707 26.8 704.6 29.4Z" fill="#222"/></g><g><rect x="738" y="12" width="25.6" height="25.6" fill="#0a96d8"/><rect x="740.6" y="14.6" width="18.4" height="14" fill="none" stroke="#9be27a" stroke-width="0.8" stroke-dasharray="2.4 1.4"/><path d="M754.6 24L754.6 34.2L757 32L758.8 35.8L760.6 35L758.8 31.4L762 31.2Z" fill="#fff"/></g><g><path d="M770 19L774.4 14.6L789 14.6L789 28.4L784.4 33.4L770 33.4Z" fill="#e0e0e0" stroke="#6f6f6f" stroke-width="0.6" stroke-linejoin="round"/><path d="M784.4 19L789 14.6L789 28.4L784.4 33.4Z" fill="#bdbdbd"/><rect x="770" y="19" width="14.4" height="14.4" fill="#5cbe7c"/></g></svg>
<div class="abs" style="left:0px;top:56.4px;width:200.6px;height:14px;background:#f0f0f0;border:1px solid #d3d3d3;box-sizing:content-box"></div>
<div class="t" style="left:17.0px;top:59.9px;color:#555">BROWSER</div>
<div class="pill" style="left:24.8px;top:77.2px;width:172.0px;height:11.6px"></div>
<div class="pill" style="left:37.0px;top:93.0px;width:90.0px;height:13.0px"></div>
<div class="pill" style="left:37.0px;top:109.2px;width:75.0px;height:13.0px"></div>
<div class="pill" style="left:37.0px;top:125.3px;width:67.0px;height:13.0px"></div>
<div class="pill" style="left:37.0px;top:141.4px;width:70.0px;height:13.0px"></div>
<div class="pill" style="left:37.0px;top:157.5px;width:77.0px;height:13.0px"></div>
<div class="pill" style="left:37.0px;top:173.7px;width:88.0px;height:13.0px"></div>
<div class="pill" style="left:35.0px;top:189.8px;width:96.0px;height:13.0px"></div>
<div class="abs" style="left:44.7px;top:78.4px;width:137.5px;height:9.8px;background:#8e8e8e;"></div>
<div class="t" style="left:66.8px;top:78.3px;color:#fff;font-size:7.7px;-webkit-text-stroke:0.25px #fff">051S Surface Extrude Modelir...</div>
<div class="t" style="left:56.3px;top:94.8px;color:#2e2e2e">Document Settings</div>
<div class="t" style="left:58.6px;top:110.9px;color:#2e2e2e">Named Views</div>
<div class="t" style="left:75.6px;top:127.1px;color:#2e2e2e">Origin</div>
<div class="t" style="left:75.6px;top:143.2px;color:#2e2e2e">Bodies</div>
<div class="t" style="left:75.6px;top:159.3px;color:#2e2e2e">Sketches</div>
<div class="t" style="left:75.6px;top:175.4px;color:#2e2e2e">Construction</div>
<div class="t" style="left:79.2px;top:191.6px;color:#2e2e2e">Path Sphere:1</div>
<svg width="210" height="210" viewBox="0 0 210 210"><path d="M3.6 64.3L6.6 62.2L6.6 66.4ZM7 64.3L10 62.2L10 66.4Z" fill="#333"/><circle cx="191" cy="64.3" r="3.1" fill="#2f2f2f"/><rect x="189.2" y="63.8" width="3.6" height="1" fill="#fff"/><path d="M12 86.6L18.4 86.6L18.4 80.2Z" fill="#8a8a8a" stroke="#333" stroke-width="0.8" stroke-linejoin="round"/><rect x="25.4" y="77.4" width="1.8" height="11" fill="#e58ae0"/><g transform="translate(35.2 83.2) scale(1.12)"><path d="M-5 0Q0 -5.2 5 0Q0 5.2 -5 0Z" fill="#8a8a8a"/><circle r="2.1" fill="#f3f3f3"/><circle r="1.2" fill="#8a8a8a"/></g><g stroke="#7a7a7a" stroke-width="0.6" fill="#fafafa"><rect x="46.5" y="79" width="5" height="8.4" rx="1"/><rect x="50.3" y="82.4" width="5.6" height="5.2" rx="1"/><rect x="49.3" y="78.6" width="4.4" height="4.6" rx="1.4"/></g><circle cx="190.1" cy="83.3" r="3.9" fill="#fff" stroke="#333" stroke-width="0.8"/><circle cx="190.1" cy="83.3" r="1.7" fill="#333"/><path transform="translate(27.2 99.7)" d="M-2.8 -3.6L3 0L-2.8 3.6Z" fill="#fafafa" stroke="#3a3a3a" stroke-width="0.9" stroke-linejoin="round"/><path transform="translate(27.2 115.8)" d="M-2.8 -3.6L3 0L-2.8 3.6Z" fill="#fafafa" stroke="#3a3a3a" stroke-width="0.9" stroke-linejoin="round"/><path transform="translate(27.2 132.0)" d="M-2.8 -3.6L3 0L-2.8 3.6Z" fill="#fafafa" stroke="#3a3a3a" stroke-width="0.9" stroke-linejoin="round"/><path transform="translate(27.2 148.1)" d="M-2.8 -3.6L3 0L-2.8 3.6Z" fill="#fafafa" stroke="#3a3a3a" stroke-width="0.9" stroke-linejoin="round"/><path transform="translate(27.2 164.2)" d="M-2.8 -3.6L3 0L-2.8 3.6Z" fill="#fafafa" stroke="#3a3a3a" stroke-width="0.9" stroke-linejoin="round"/><path transform="translate(27.2 180.3)" d="M-2.8 -3.6L3 0L-2.8 3.6Z" fill="#fafafa" stroke="#3a3a3a" stroke-width="0.9" stroke-linejoin="round"/><path transform="translate(27.2 196.5)" d="M-2.8 -3.6L3 0L-2.8 3.6Z" fill="#fafafa" stroke="#3a3a3a" stroke-width="0.9" stroke-linejoin="round"/><g transform="translate(43.0 99.7)"><rect x="-1" y="-4.6" width="2" height="9.2" fill="#5e5e5e" transform="rotate(0)"/><rect x="-1" y="-4.6" width="2" height="9.2" fill="#5e5e5e" transform="rotate(45)"/><rect x="-1" y="-4.6" width="2" height="9.2" fill="#5e5e5e" transform="rotate(90)"/><rect x="-1" y="-4.6" width="2" height="9.2" fill="#5e5e5e" transform="rotate(135)"/><circle r="3.3" fill="#5e5e5e"/><circle r="1.5" fill="#f3f3f3"/></g><path transform="translate(43.8 115.8)" d="M-5.3 -3.6L-1.2 -3.6L-0.4 -2.6L5.3 -2.6L5.3 3.8L-5.3 3.8Z" fill="#8c8c8c"/><path transform="translate(43.8 115.8)" d="M-5.3 -1.6L5.3 -1.6" stroke="#a8a8a8" stroke-width="0.5"/><g transform="translate(43.8 132.0) scale(1.12)"><path d="M-5 0Q0 -4.8 5 0Q0 4.8 -5 0Z" fill="none" stroke="#b0b0b0" stroke-width="0.9"/><circle r="1.5" fill="none" stroke="#b0b0b0" stroke-width="0.8"/><path d="M-3.6 3.6L3.6 -3.6" stroke="#b0b0b0" stroke-width="0.9"/></g><path transform="translate(60.7 132.0)" d="M-5.3 -3.6L-1.2 -3.6L-0.4 -2.6L5.3 -2.6L5.3 3.8L-5.3 3.8Z" fill="#8c8c8c"/><path transform="translate(60.7 132.0)" d="M-5.3 -1.6L5.3 -1.6" stroke="#a8a8a8" stroke-width="0.5"/><g transform="translate(43.8 148.1) scale(1.12)"><path d="M-5 0Q0 -4.8 5 0Q0 4.8 -5 0Z" fill="none" stroke="#b0b0b0" stroke-width="0.9"/><circle r="1.5" fill="none" stroke="#b0b0b0" stroke-width="0.8"/><path d="M-3.6 3.6L3.6 -3.6" stroke="#b0b0b0" stroke-width="0.9"/></g><path transform="translate(60.7 148.1)" d="M-5.3 -3.6L-1.2 -3.6L-0.4 -2.6L5.3 -2.6L5.3 3.8L-5.3 3.8Z" fill="#8c8c8c"/><path transform="translate(60.7 148.1)" d="M-5.3 -1.6L5.3 -1.6" stroke="#a8a8a8" stroke-width="0.5"/><g transform="translate(43.8 164.2) scale(1.12)"><path d="M-5 0Q0 -5.2 5 0Q0 5.2 -5 0Z" fill="#8a8a8a"/><circle r="2.1" fill="#f3f3f3"/><circle r="1.2" fill="#8a8a8a"/></g><path transform="translate(60.7 164.2)" d="M-5.3 -3.6L-1.2 -3.6L-0.4 -2.6L5.3 -2.6L5.3 3.8L-5.3 3.8Z" fill="#8c8c8c"/><path transform="translate(60.7 164.2)" d="M-5.3 -1.6L5.3 -1.6" stroke="#a8a8a8" stroke-width="0.5"/><g transform="translate(43.8 180.3) scale(1.12)"><path d="M-5 0Q0 -5.2 5 0Q0 5.2 -5 0Z" fill="#8a8a8a"/><circle r="2.1" fill="#f3f3f3"/><circle r="1.2" fill="#8a8a8a"/></g><path transform="translate(60.7 180.3)" d="M-5.3 -3.6L-1.2 -3.6L-0.4 -2.6L5.3 -2.6L5.3 3.8L-5.3 3.8Z" fill="#8c8c8c"/><path transform="translate(60.7 180.3)" d="M-5.3 -1.6L5.3 -1.6" stroke="#a8a8a8" stroke-width="0.5"/><rect x="36.6" y="190" width="3.2" height="12.5" fill="#b4ec5a"/><g transform="translate(46.5 196.5) scale(1.12)"><path d="M-5 0Q0 -5.2 5 0Q0 5.2 -5 0Z" fill="#8a8a8a"/><circle r="2.1" fill="#f3f3f3"/><circle r="1.2" fill="#8a8a8a"/></g><g transform="translate(63.8 196.5)" stroke="#4a4a4a" stroke-width="0.7" stroke-linejoin="round"><path d="M-4.6 -2.4L-2 -4.6L4.8 -4.6L4.8 2.4L2.2 4.6L-4.6 4.6Z" fill="#f6f6f6"/><path d="M-4.6 -2.4L2.2 -2.4L2.2 4.6M2.2 -2.4L4.8 -4.6" fill="none"/></g></svg>
<div class="abs" style="left:0px;top:596.2px;width:200.6px;height:14.4px;background:#f0f0f0;border:1px solid #d3d3d3;"></div>
<div class="t" style="left:17.0px;top:599.6px;color:#555">COMMENTS</div>
<div class="abs" style="left:322.5px;top:596.3px;width:159.5px;height:14.6px;background:rgba(246,246,246,0.93);"></div>
<div class="abs" style="left:0;top:615.9px;width:800px;height:28.1px;background:#f1f1f1;border-top:1px solid #e7e7e7;box-sizing:border-box"></div>
<div class="abs" style="left:94.5px;top:621px;width:272.2px;height:4px;background:#e58ae0;"></div>
<div class="abs" style="left:369.7px;top:621px;width:78.1px;height:4px;background:#b9ec62;"></div>
<svg width="800" height="644" viewBox="0 0 800 644"><circle cx="191" cy="604.3" r="3.1" fill="#2f2f2f"/><rect x="189.2" y="603.8" width="3.6" height="1" fill="#fff"/><rect x="190.5" y="602.5" width="1" height="3.6" fill="#fff"/><g fill="#3a3a3a"><rect x="5" y="628.3" width="1.3" height="8.4"/><path d="M12.2 628.3L12.2 636.7L6.6 632.5Z"/><path d="M28.6 628.3L28.6 636.7L21 632.5Z"/><rect x="28.2" y="630.4" width="1.8" height="4.2" opacity="0.6"/><path d="M38.4 627.4L38.4 637.6L46.4 632.5Z"/><path d="M55.6 628.3L55.6 636.7L63.2 632.5Z"/><rect x="54.2" y="630.4" width="1.8" height="4.2" opacity="0.6"/><path d="M72 628.3L72 636.7L77.6 632.5Z"/><rect x="77.9" y="628.3" width="1.3" height="8.4"/></g><g transform="translate(100.0 631.4) scale(1.12)"><rect x="-4.6" y="-4.8" width="8.4" height="8.4" fill="#fdfdfd" stroke="#7fb2e6" stroke-width="0.8" stroke-dasharray="1.4 0.9"/><path d="M-3 2.2L-3 -3.2L2.4 -3.2Q2 1.8 -3 2.2Z" fill="none" stroke="#444" stroke-width="0.7"/><path d="M0.6 3.4L4.6 -0.6L5.8 0.6L1.8 4.6Z" fill="#f2b01e"/><path d="M4.6 -0.6L5.4 -1.4L6.6 -0.2L5.8 0.6Z" fill="#e8483f"/><path d="M0.6 3.4L1.8 4.6L0.2 5Z" fill="#555"/></g><rect x="100.9" y="639.4" width="0.8" height="2.8" fill="#bdbdbd"/><g transform="translate(116.3 631.4)"><path d="M-4.6 -3L-2.6 -5L4.8 -5L4.8 2.8L2.8 4.8L-4.6 4.8Z" fill="#f3ad78"/><path d="M-4.6 -3L-2.6 -5L4.8 -5L2.8 -3Z" fill="#f9d2b4"/><path d="M2.8 -3L4.8 -5L4.8 2.8L2.8 4.8Z" fill="#e09460"/></g><rect x="117.2" y="639.4" width="0.8" height="2.8" fill="#bdbdbd"/><g transform="translate(132.6 631.4) scale(1.12)"><rect x="-4.6" y="-4.8" width="8.4" height="8.4" fill="#fdfdfd" stroke="#7fb2e6" stroke-width="0.8" stroke-dasharray="1.4 0.9"/><path d="M-3 2.2L-3 -3.2L2.4 -3.2Q2 1.8 -3 2.2Z" fill="none" stroke="#444" stroke-width="0.7"/><path d="M0.6 3.4L4.6 -0.6L5.8 0.6L1.8 4.6Z" fill="#f2b01e"/><path d="M4.6 -0.6L5.4 -1.4L6.6 -0.2L5.8 0.6Z" fill="#e8483f"/><path d="M0.6 3.4L1.8 4.6L0.2 5Z" fill="#555"/></g><rect x="133.5" y="639.4" width="0.8" height="2.8" fill="#bdbdbd"/><g transform="translate(148.8 631.4) scale(1.12)"><rect x="-4.6" y="-4.8" width="8.4" height="8.4" fill="#fdfdfd" stroke="#7fb2e6" stroke-width="0.8" stroke-dasharray="1.4 0.9"/><path d="M-3 2.2L-3 -3.2L2.4 -3.2Q2 1.8 -3 2.2Z" fill="none" stroke="#444" stroke-width="0.7"/><path d="M0.6 3.4L4.6 -0.6L5.8 0.6L1.8 4.6Z" fill="#f2b01e"/><path d="M4.6 -0.6L5.4 -1.4L6.6 -0.2L5.8 0.6Z" fill="#e8483f"/><path d="M0.6 3.4L1.8 4.6L0.2 5Z" fill="#555"/></g><rect x="149.7" y="639.4" width="0.8" height="2.8" fill="#bdbdbd"/><g transform="translate(165.1 631.4)"><path d="M-5 -0.5L3.4 -4.8L5 1L-3.4 5Z" fill="#eb9a66"/><path d="M-5 -0.5L3.4 -4.8L5 1L-3.4 5Z" fill="none" stroke="#c47a48" stroke-width="0.6"/><path d="M-4 3.6L4.4 -3.4" stroke="#5a9a3a" stroke-width="0.7"/></g><rect x="166.0" y="639.4" width="0.8" height="2.8" fill="#bdbdbd"/><g transform="translate(181.4 631.4) scale(1.12)"><rect x="-4.6" y="-4.8" width="8.4" height="8.4" fill="#fdfdfd" stroke="#7fb2e6" stroke-width="0.8" stroke-dasharray="1.4 0.9"/><path d="M-3 2.2L-3 -3.2L2.4 -3.2Q2 1.8 -3 2.2Z" fill="none" stroke="#444" stroke-width="0.7"/><path d="M0.6 3.4L4.6 -0.6L5.8 0.6L1.8 4.6Z" fill="#f2b01e"/><path d="M4.6 -0.6L5.4 -1.4L6.6 -0.2L5.8 0.6Z" fill="#e8483f"/><path d="M0.6 3.4L1.8 4.6L0.2 5Z" fill="#555"/></g><rect x="182.3" y="639.4" width="0.8" height="2.8" fill="#bdbdbd"/><g transform="translate(197.7 631.4)"><rect x="-4.8" y="-4.4" width="7" height="5.6" rx="2" fill="#f5b88c"/><rect x="-1.6" y="-1" width="6.4" height="5.8" rx="1" fill="#f7f7f7" stroke="#aaa" stroke-width="0.6"/><rect x="-4.4" y="0.6" width="4" height="3.8" rx="1" fill="#f5b88c"/></g><rect x="198.6" y="639.4" width="0.8" height="2.8" fill="#bdbdbd"/><g transform="translate(214.0 631.4)"><rect x="-0.6" y="-3" width="6" height="3.8" fill="#f3ad78"/><path d="M-3.6 -4.6L1.6 2.4M2.2 -4.6L-2.4 2.4" stroke="#222" stroke-width="1.1" fill="none"/><circle cx="-2.6" cy="3.6" r="1.4" fill="none" stroke="#222" stroke-width="0.9"/><circle cx="1.8" cy="3.6" r="1.4" fill="none" stroke="#222" stroke-width="0.9"/></g><rect x="214.9" y="639.4" width="0.8" height="2.8" fill="#bdbdbd"/><g transform="translate(230.2 631.4)"><rect x="-0.6" y="-3" width="6" height="3.8" fill="#f3ad78"/><path d="M-3.6 -4.6L1.6 2.4M2.2 -4.6L-2.4 2.4" stroke="#222" stroke-width="1.1" fill="none"/><circle cx="-2.6" cy="3.6" r="1.4" fill="none" stroke="#222" stroke-width="0.9"/><circle cx="1.8" cy="3.6" r="1.4" fill="none" stroke="#222" stroke-width="0.9"/></g><rect x="231.1" y="639.4" width="0.8" height="2.8" fill="#bdbdbd"/><g transform="translate(246.5 631.4)"><rect x="-4.4" y="-5" width="8.8" height="10" fill="#f3ad78"/><path d="M0 -5L0 5M-2.2 -3.4L2.2 -3.4M-2.2 -1.2L2.2 -1.2M-2.2 1L2.2 1M-2.2 3.2L2.2 3.2" stroke="#b45f24" stroke-width="0.7"/></g><rect x="247.4" y="639.4" width="0.8" height="2.8" fill="#bdbdbd"/><g transform="translate(262.8 631.4)"><path d="M-5.4 0.8L0.4 -3.8L5.4 -1.2L-0.6 3.6Z" fill="#4f9fe0"/><path d="M-5.4 0.8L-0.6 3.6L-0.6 5L-5.4 2.2Z" fill="#e9e9e9" stroke="#999" stroke-width="0.4"/><path d="M-0.6 3.6L5.4 -1.2L5.4 0.2L-0.6 5Z" fill="#d2d2d2" stroke="#999" stroke-width="0.4"/></g><rect x="263.7" y="639.4" width="0.8" height="2.8" fill="#bdbdbd"/><g transform="translate(279.1 631.4)"><path d="M-5.4 0.8L0.4 -3.8L5.4 -1.2L-0.6 3.6Z" fill="#4f9fe0"/><path d="M-5.4 0.8L-0.6 3.6L-0.6 5L-5.4 2.2Z" fill="#e9e9e9" stroke="#999" stroke-width="0.4"/><path d="M-0.6 3.6L5.4 -1.2L5.4 0.2L-0.6 5Z" fill="#d2d2d2" stroke="#999" stroke-width="0.4"/></g><rect x="280.0" y="639.4" width="0.8" height="2.8" fill="#bdbdbd"/><g transform="translate(295.4 631.4) scale(1.12)"><rect x="-4.6" y="-4.8" width="8.4" height="8.4" fill="#fdfdfd" stroke="#7fb2e6" stroke-width="0.8" stroke-dasharray="1.4 0.9"/><path d="M-3 2.2L-3 -3.2L2.4 -3.2Q2 1.8 -3 2.2Z" fill="none" stroke="#444" stroke-width="0.7"/><path d="M0.6 3.4L4.6 -0.6L5.8 0.6L1.8 4.6Z" fill="#f2b01e"/><path d="M4.6 -0.6L5.4 -1.4L6.6 -0.2L5.8 0.6Z" fill="#e8483f"/><path d="M0.6 3.4L1.8 4.6L0.2 5Z" fill="#555"/></g><rect x="296.3" y="639.4" width="0.8" height="2.8" fill="#bdbdbd"/><g transform="translate(311.6 631.4)"><path d="M-5.2 -1Q0 -6 5.2 -1L5.2 3.6Q0 -0.6 -5.2 3.6Z" fill="#3f8fd8"/><path d="M-5.2 -1Q0 -6 5.2 -1Q0 -4 -5.2 -1Z" fill="#7cbcf0"/><path d="M-3 4.2Q0 2 3 4.2" fill="none" stroke="#3f8fd8" stroke-width="1"/></g><rect x="312.5" y="639.4" width="0.8" height="2.8" fill="#bdbdbd"/><g transform="translate(327.9 631.4)"><path d="M-2.4 -2.6L-0.4 -4.8L5.2 -4.8L5.2 1L3.2 3.2L-2.4 3.2Z" fill="#4f9fe0"/><path d="M-5 -0.6L-3.4 -2.4L2.2 -2.4L2.2 3.2L0.6 5L-5 5Z" fill="#f4f4f4" stroke="#777" stroke-width="0.6"/><path d="M-5 -0.6L0.6 -0.6L0.6 5M0.6 -0.6L2.2 -2.4" fill="none" stroke="#777" stroke-width="0.6"/></g><rect x="328.8" y="639.4" width="0.8" height="2.8" fill="#bdbdbd"/><g transform="translate(344.2 631.4)" fill="#2a2a2a"><rect x="-3.6" y="-0.5" width="7.2" height="1"/><rect x="-0.5" y="-3.6" width="1" height="7.2"/><path d="M0 -5.6L-1.8 -3.2L1.8 -3.2ZM0 5.6L-1.8 3.2L1.8 3.2ZM-5.6 0L-3.2 -1.8L-3.2 1.8ZM5.6 0L3.2 -1.8L3.2 1.8Z"/></g><rect x="345.1" y="639.4" width="0.8" height="2.8" fill="#bdbdbd"/><g transform="translate(360.5 631.4)"><path d="M-4.6 -1.4L-2.4 -3.6L2.6 -3.6L4.2 -1.6L4.2 2.6L2.2 4.8L-4.6 4.8Z" fill="#f1f1f1" stroke="#555" stroke-width="0.7"/><path d="M3.6 -5.8L4.3 -4L6.2 -3.6L4.6 -2.6L5 -0.8L3.6 -2L2.2 -0.8L2.6 -2.6L1 -3.6L2.9 -4Z" fill="#f5a51e"/></g><rect x="361.4" y="639.4" width="0.8" height="2.8" fill="#bdbdbd"/><g transform="translate(376.8 631.4)"><rect x="-4.4" y="-5" width="3.8" height="6.4" rx="1.2" fill="#f2f2f2" stroke="#b9b9b9" stroke-width="0.6"/><rect x="-0.6" y="-0.2" width="5" height="5" rx="1.2" fill="#dcdcdc" stroke="#b0b0b0" stroke-width="0.6"/><circle cx="-2.6" cy="2.6" r="1" fill="#e05050"/></g><rect x="377.7" y="639.4" width="0.8" height="2.8" fill="#bdbdbd"/><g transform="translate(393.0 631.4)"><rect x="-4.4" y="-5" width="3.8" height="6.4" rx="1.2" fill="#f2f2f2" stroke="#b9b9b9" stroke-width="0.6"/><rect x="-0.6" y="-0.2" width="5" height="5" rx="1.2" fill="#dcdcdc" stroke="#b0b0b0" stroke-width="0.6"/><circle cx="-2.6" cy="2.6" r="1" fill="#e05050"/></g><rect x="393.9" y="639.4" width="0.8" height="2.8" fill="#bdbdbd"/><g transform="translate(409.3 631.4)"><path d="M-4.6 -3L-2.6 -5L4.8 -5L4.8 2.8L2.8 4.8L-4.6 4.8Z" fill="#4f9fe0"/><path d="M-4.6 -3L-2.6 -5L4.8 -5L2.8 -3Z" fill="#8cc4f2"/><path d="M2.8 -3L4.8 -5L4.8 2.8L2.8 4.8Z" fill="#3a7fc0"/></g><rect x="410.2" y="639.4" width="0.8" height="2.8" fill="#bdbdbd"/><g transform="translate(425.6 631.4) scale(1.12)"><rect x="-4.6" y="-4.8" width="8.4" height="8.4" fill="#fdfdfd" stroke="#7fb2e6" stroke-width="0.8" stroke-dasharray="1.4 0.9"/><path d="M-3 2.2L-3 -3.2L2.4 -3.2Q2 1.8 -3 2.2Z" fill="none" stroke="#444" stroke-width="0.7"/><path d="M0.6 3.4L4.6 -0.6L5.8 0.6L1.8 4.6Z" fill="#f2b01e"/><path d="M4.6 -0.6L5.4 -1.4L6.6 -0.2L5.8 0.6Z" fill="#e8483f"/><path d="M0.6 3.4L1.8 4.6L0.2 5Z" fill="#555"/></g><rect x="426.5" y="639.4" width="0.8" height="2.8" fill="#bdbdbd"/><g transform="translate(441.9 631.4)"><path d="M-4.6 -3L-2.6 -5L4.8 -5L4.8 2.8L2.8 4.8L-4.6 4.8Z" fill="#4f9fe0"/><path d="M-4.6 -3L-2.6 -5L4.8 -5L2.8 -3Z" fill="#8cc4f2"/><path d="M2.8 -3L4.8 -5L4.8 2.8L2.8 4.8Z" fill="#3a7fc0"/></g><rect x="442.8" y="639.4" width="0.8" height="2.8" fill="#bdbdbd"/><path d="M445.3 622.4L453.5 622.4L449.4 628.4Z" fill="#4a4a4a"/><rect x="448.9" y="626" width="1" height="18" fill="#4a4a4a"/><g transform="translate(792.2 632.1) scale(1.1)"><g transform="translate(0.0 0.0)"><rect x="-1" y="-4.6" width="2" height="9.2" fill="#6c6c6c" transform="rotate(0)"/><rect x="-1" y="-4.6" width="2" height="9.2" fill="#6c6c6c" transform="rotate(45)"/><rect x="-1" y="-4.6" width="2" height="9.2" fill="#6c6c6c" transform="rotate(90)"/><rect x="-1" y="-4.6" width="2" height="9.2" fill="#6c6c6c" transform="rotate(135)"/><circle r="3.3" fill="#6c6c6c"/><circle r="1.5" fill="#f1f1f1"/></g></g><g transform="translate(329.6 603.5)" stroke="#333" fill="none" stroke-width="0.8"><ellipse rx="4.4" ry="1.7"/><path d="M0 -4.6L0 4.6M-1.2 -3.4L0 -4.8L1.2 -3.4M-1.2 3.4L0 4.8L1.2 3.4"/></g><path d="M338.4 602.7l4 0l-2 2.6z" fill="#333"/><g transform="translate(352 603.5)" stroke="#333" fill="none" stroke-width="0.8"><rect x="-4.2" y="-2.2" width="8.4" height="6" rx="0.8"/><path d="M-2.6 -2.2L-2.6 -3.8M2.6 -2.2L2.6 -3.8M-3 -4L3 -4"/><rect x="-2" y="0" width="4" height="2" fill="#ddd"/></g><g transform="translate(369.7 603.5)" stroke="#333" fill="#fafafa" stroke-width="0.75" stroke-linejoin="round"><path d="M-2.4 4.6L-4.4 0.6L-3.4 -0.2L-2 1.4L-2 -3.2L-1 -3.4L-0.6 -0.6L-0.4 -4.2L0.8 -4.2L0.8 -0.6L1.4 -3.8L2.4 -3.6L2.4 -0.2L3.2 -2.6L4 -2.2L3.6 2.4L2.6 4.6Z"/></g><g transform="translate(386.6 603.5)" stroke="#333" fill="none" stroke-width="0.9"><circle cx="-1" cy="-0.6" r="2.9" fill="#fafafa"/><path d="M1.2 1.6L4 4.6" stroke-width="1.3"/><path d="M3 -3.6L5.4 -3.6M4.2 -4.8L4.2 -2.4" stroke-width="0.7"/></g><g transform="translate(403.9 603.5)" stroke="#333" fill="none" stroke-width="0.9"><circle cx="-0.8" cy="-0.8" r="3.6" fill="#fafafa"/><rect x="-2.6" y="-2.4" width="3.6" height="3.2" stroke-width="0.6"/><path d="M1.8 2L4.8 5" stroke-width="1.4"/></g><path d="M413.0 602.7l4 0l-2 2.6z" fill="#333"/><g transform="translate(426.8 603.5)"><rect x="-4.6" y="-4.4" width="9.2" height="6.8" fill="#5b8fd0" stroke="#333" stroke-width="0.7"/><rect x="-3.4" y="-3.2" width="6.8" height="4.4" fill="#9cc0ea"/><rect x="-1" y="2.4" width="2" height="1.6" fill="#555"/><rect x="-2.8" y="3.8" width="5.6" height="0.9" fill="#555"/></g><path d="M433.8 602.7l4 0l-2 2.6z" fill="#333"/><g transform="translate(447.8 603.5)"><rect x="-4.6" y="-4.2" width="9.2" height="8.4" fill="#e8e8e8" stroke="#444" stroke-width="0.7"/><path d="M-4.6 -2.1L4.6 -2.1M-4.6 0L4.6 0M-4.6 2.1L4.6 2.1M-2.3 -4.2L-2.3 4.2M0 -4.2L0 4.2M2.3 -4.2L2.3 4.2" stroke="#555" stroke-width="0.5"/></g><path d="M454.8 602.7l4 0l-2 2.6z" fill="#333"/><g transform="translate(468.5 603.5)"><rect x="-4.8" y="-4.2" width="9.6" height="8.4" rx="0.8" fill="#5b8fd0" stroke="#3a5f9a" stroke-width="0.6"/><path d="M0 -4.2L0 4.2M-4.8 0L4.8 0" stroke="#e8f0fa" stroke-width="0.9"/></g><path d="M475.5 602.7l4 0l-2 2.6z" fill="#333"/></svg>
</body></html>
